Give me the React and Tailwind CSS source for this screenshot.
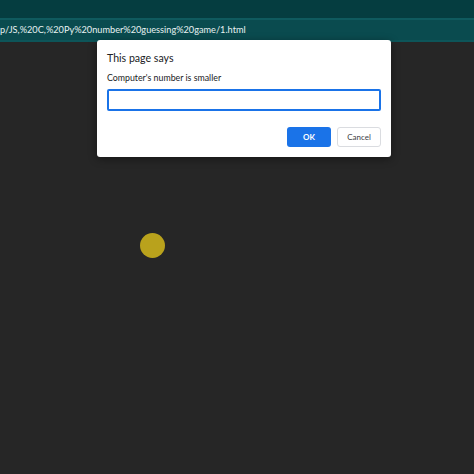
export default function App() {
  return (
    <div className="w-[474px] h-[474px] bg-[#262626] flex flex-col overflow-hidden font-['Lato',sans-serif]">
      {/* Browser chrome */}
      <div className="h-[18px] bg-[#053d40] shrink-0" />
      <div className="h-[2px] bg-[#0f5a5e] shrink-0" />
      <div className="h-[20px] bg-[#0a4b4f] shrink-0 flex items-center">
        <span className="text-[9.2px] text-[#e8f2f2] whitespace-nowrap">
          p/JS,%20C,%20Py%20number%20guessing%20game/1.html
        </span>
      </div>
      <div className="h-[2px] bg-[#0d5559] shrink-0" />

      {/* Page */}
      <div className="relative flex-1">
        <div className="absolute left-[140px] top-[191px] w-[25px] h-[25px] rounded-full bg-[#b9a21c]" />

        {/* Dialog */}
        <div className="absolute left-[97px] top-[-2px] w-[294px] h-[117px] bg-white rounded-[3px] shadow-[0_2px_8px_rgba(0,0,0,0.4)] px-[10px] pt-[11px] flex flex-col">
          <div className="text-[10.6px] text-[#202124] leading-[14px]">This page says</div>
          <div className="mt-[7px] text-[8.8px] text-[#202124] leading-[12px]">Computer's number is smaller</div>
          <div className="mt-[5px] h-[22px] border-2 border-[#1a73e8] rounded-[2px]" />
          <div className="mt-[16px] flex justify-end gap-[6px]">
            <div className="w-[44px] h-[20px] bg-[#1a73e8] rounded-[3px] flex items-center justify-center text-[8px] text-white font-bold">OK</div>
            <div className="w-[44px] h-[20px] border border-[#dadce0] rounded-[3px] flex items-center justify-center text-[8px] text-[#3c4043]">Cancel</div>
          </div>
        </div>
      </div>
    </div>
  );
}
